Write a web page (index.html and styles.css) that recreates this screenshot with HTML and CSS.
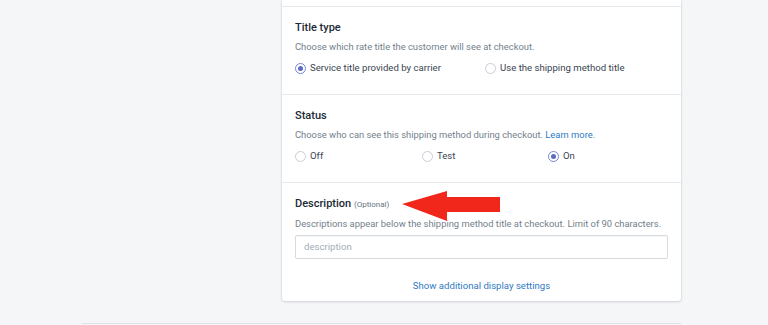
FILE: index.html
```html
<!DOCTYPE html>
<html>
<head>
<meta charset="utf-8">
<link rel="stylesheet" href="styles.css">
</head>
<body>
<div class="page">
  <div class="card">
    <div class="prev"></div>
    <section class="section">
      <h2 class="heading">Title type</h2>
      <p class="help">Choose which rate title the customer will see at checkout.</p>
      <div class="radios two">
        <label class="radio"><span class="dot checked"></span>Service title provided by carrier</label>
        <label class="radio"><span class="dot"></span>Use the shipping method title</label>
      </div>
    </section>
    <section class="section">
      <h2 class="heading">Status</h2>
      <p class="help">Choose who can see this shipping method during checkout. <a class="link">Learn more.</a></p>
      <div class="radios three">
        <label class="radio"><span class="dot"></span>Off</label>
        <label class="radio"><span class="dot"></span>Test</label>
        <label class="radio"><span class="dot checked"></span>On</label>
      </div>
    </section>
    <section class="section last">
      <div class="heading-row">
        <h2 class="heading">Description <span class="optional">(Optional)</span></h2>
        <svg class="arrow" width="100" height="32" viewBox="0 0 100 32">
          <polygon points="0,13 45,0 45,6 98,6 98,21 45,21 45,30" fill="#f1271c"/>
        </svg>
      </div>
      <p class="help nowrap">Descriptions appear below the shipping method title at checkout. Limit of 90 characters.</p>
      <div class="input">description</div>
      <div class="footer"><a class="link">Show additional display settings</a></div>
    </section>
  </div>
  <div class="rule"></div>
</div>
</body>
</html>
```

FILE: styles.css
```css
html, body {
  margin: 0;
  padding: 0;
  background: #f4f6f8;
  font-family: Roboto, "Noto Sans", sans-serif;
  color: #212b36;
  overflow: hidden;
}
.page {
  width: 768px;
  height: 325px;
  display: flex;
  flex-direction: column;
}
.card {
  margin-left: 282px;
  width: 399px;
  background: #fff;
  box-shadow: 0 0 0 1px rgba(63, 63, 68, 0.05), 0 1px 3px 0 rgba(63, 63, 68, 0.15);
  border-radius: 0 0 3px 3px;
}
.prev {
  height: 6px;
  border-bottom: 1px solid #e6e9ec;
}
.section {
  padding: 13px 13px 18px 13px;
  border-bottom: 1px solid #e6e9ec;
}
.section.last {
  border-bottom: none;
  padding-bottom: 7px;
}
.heading {
  margin: 0;
  font-size: 11px;
  line-height: 16px;
  font-weight: 500;
  color: #212b36;
}
.heading-row {
  position: relative;
}
.optional {
  font-size: 8px;
  font-weight: 400;
  color: #637381;
}
.arrow {
  position: absolute;
  left: 107px;
  top: -5px;
}
.help {
  margin: 3px 0 0 0;
  font-size: 9.4px;
  line-height: 16px;
  color: #737f8c;
}
.help.nowrap {
  white-space: nowrap;
}
.link {
  color: #2f7bc4;
  text-decoration: none;
}
.radios {
  margin-top: 5px;
  display: grid;
}
.radios.two {
  grid-template-columns: 190px 1fr;
}
.radios.three {
  grid-template-columns: 127px 126px 1fr;
}
.radio {
  display: flex;
  align-items: center;
  gap: 4px;
  font-size: 9.6px;
  line-height: 16px;
  color: #3a4552;
}
.dot {
  width: 9px;
  height: 9px;
  border: 1px solid #c9cfd6;
  border-radius: 50%;
  background: #fff;
  display: inline-flex;
  align-items: center;
  justify-content: center;
  box-sizing: content-box;
}
.dot.checked {
  border-color: #7b83d1;
}
.dot.checked::after {
  content: "";
  width: 5px;
  height: 5px;
  border-radius: 50%;
  background: #5c6ac4;
}
.input {
  margin-top: 3px;
  height: 22px;
  border: 1px solid #d6dbe0;
  border-radius: 2px;
  padding: 0 8px;
  font-size: 9.6px;
  line-height: 22px;
  color: #a3adb7;
  box-shadow: inset 0 1px 0 0 rgba(99, 115, 129, 0.05);
}
.footer {
  margin-top: 19px;
  text-align: center;
  font-size: 9.6px;
  line-height: 16px;
}
.rule {
  margin-top: 22px;
  margin-left: 82px;
  width: 599px;
  border-top: 1px solid #dfe3e8;
}
```
